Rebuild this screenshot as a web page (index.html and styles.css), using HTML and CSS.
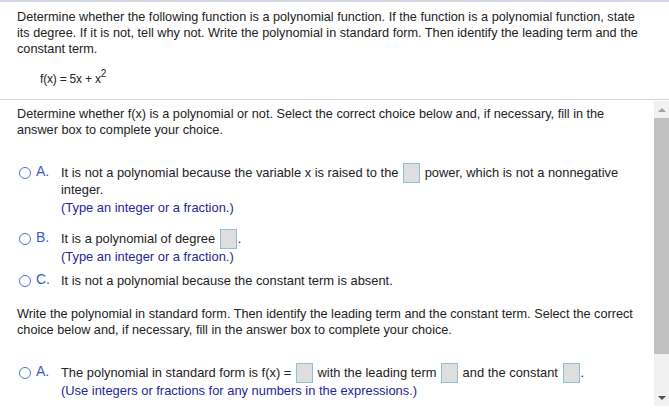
FILE: index.html
```html
<!DOCTYPE html>
<html lang="en">
<head>
    <meta charset="UTF-8">
    <title>Polynomial Function</title>
    <link rel="stylesheet" href="styles.css">
</head>
<body>
    <div class="question">
        <p class="prompt">Determine whether the following function is a polynomial function. If the function is a polynomial function, state its degree. If it is not, tell why not. Write the polynomial in standard form. Then identify the leading term and the constant term.</p>
        <div class="formula">f(x) = 5x + x<sup>2</sup></div>
    </div>

    <div class="work-area">
        <div class="work-content">
            <p class="prompt">Determine whether f(x) is a polynomial or not. Select the correct choice below and, if necessary, fill in the answer box to complete your choice.</p>

            <div class="choices">
                <div class="choice">
                    <span class="radio"></span>
                    <span class="letter">A.</span>
                    <div class="choice-body">
                        <div class="choice-text">It is not a polynomial because the variable x is raised to the <span class="answer-box"></span> power, which is not a nonnegative integer.</div>
                        <div class="hint">(Type an integer or a fraction.)</div>
                    </div>
                </div>
                <div class="choice">
                    <span class="radio"></span>
                    <span class="letter">B.</span>
                    <div class="choice-body">
                        <div class="choice-text">It is a polynomial of degree <span class="answer-box"></span>.</div>
                        <div class="hint">(Type an integer or a fraction.)</div>
                    </div>
                </div>
                <div class="choice">
                    <span class="radio"></span>
                    <span class="letter">C.</span>
                    <div class="choice-body">
                        <div class="choice-text">It is not a polynomial because the constant term is absent.</div>
                    </div>
                </div>
            </div>

            <p class="prompt">Write the polynomial in standard form. Then identify the leading term and the constant term. Select the correct choice below and, if necessary, fill in the answer box to complete your choice.</p>

            <div class="choices">
                <div class="choice">
                    <span class="radio"></span>
                    <span class="letter">A.</span>
                    <div class="choice-body">
                        <div class="choice-text">The polynomial in standard form is f(x) = <span class="answer-box"></span> with the leading term <span class="answer-box"></span> and the constant <span class="answer-box"></span>.</div>
                        <div class="hint">(Use integers or fractions for any numbers in the expressions.)</div>
                    </div>
                </div>
            </div>
        </div>

        <div class="scrollbar">
            <div class="arrow up"></div>
            <div class="thumb"></div>
            <div class="track-end"></div>
            <div class="arrow down"></div>
        </div>
    </div>
</body>
</html>
```

FILE: styles.css
```css
body {
    margin: 0;
    font-family: 'Liberation Sans', Arial, sans-serif;
    font-size: 12.7px;
    line-height: 16px;
    color: #222;
    background: #fff;
    border-top: 2px solid #d3d9e4;
    height: 413px;
    overflow: hidden;
}

p {
    margin: 0;
}

.question {
    padding: 7px 20px 0 17px;
    border-bottom: 1px solid #ccd3df;
    height: 98px;
    box-sizing: border-box;
}

.formula {
    margin-top: 14px;
    padding-left: 23px;
    font-size: 12px;
    letter-spacing: -0.2px;
}

.formula sup {
    font-size: 10px;
    line-height: 0;
    vertical-align: 6px;
}

.work-area {
    display: flex;
    height: 314px;
}

.work-content {
    flex: 1;
    padding: 6px 6px 0 17px;
}

.choices {
    margin: 26px 0 17px 0;
    display: flex;
    flex-direction: column;
    gap: 7px;
}

.choices .choice:first-child {
    margin-bottom: 7px;
}

.choice {
    display: flex;
    align-items: flex-start;
}

.radio {
    width: 10px;
    height: 10px;
    border: 1px solid #4d72d1;
    border-radius: 50%;
    margin: 3px 5px 0 2px;
    flex-shrink: 0;
}

.letter {
    color: #3a5bc6;
    font-size: 14px;
    width: 25px;
    flex-shrink: 0;
    margin-top: -1px;
}

.choice-body {
    flex: 1;
    font-size: 12.9px;
}

.choice-text {
    line-height: 17px;
}

.hint {
    color: #25259a;
    margin-top: 2px;
}

.answer-box {
    display: inline-block;
    width: 15px;
    height: 18px;
    margin: -3px 1px;
    border: 1px solid #8fc1d2;
    background: #dedede;
    vertical-align: -3px;
}

.scrollbar {
    width: 15px;
    margin-top: 1px;
    height: 305px;
    background: #f1f1f1;
    display: flex;
    flex-direction: column;
}

.arrow {
    height: 17px;
    display: flex;
    justify-content: center;
    align-items: center;
}

.arrow::before {
    content: '';
    border-left: 4px solid transparent;
    border-right: 4px solid transparent;
}

.arrow.up::before {
    border-bottom: 4px solid #a3a3a3;
}

.arrow.down::before {
    border-top: 4px solid #505050;
}

.thumb {
    height: 236px;
    background: #c1c1c1;
}

.track-end {
    flex: 1;
}
```
